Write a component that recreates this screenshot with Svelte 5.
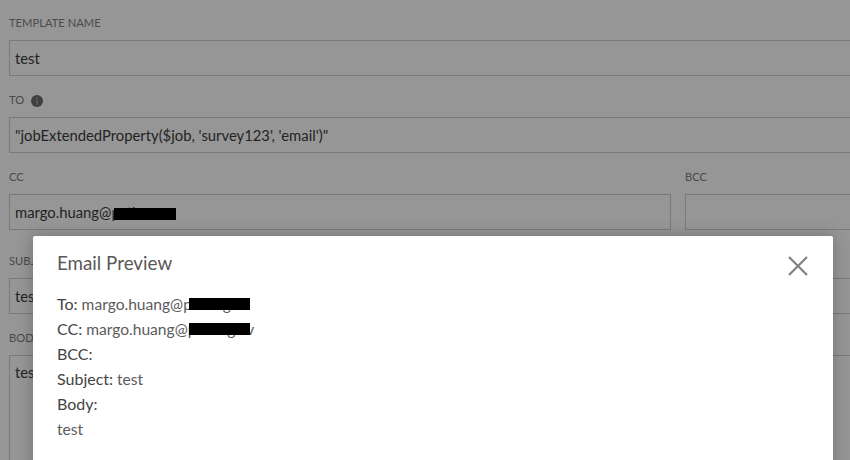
<script>
  const fields = [
    { label: 'TEMPLATE NAME', value: 'test' },
    { label: 'TO', value: `"jobExtendedProperty($job, 'survey123', 'email')"`, info: true },
  ];
</script>

<div class="page">
  <form class="form">
    {#each fields as field}
      <div class="field">
        <div class="label">
          {field.label}
          {#if field.info}
            <svg class="info" viewBox="0 0 12 12" width="12" height="12">
              <circle cx="6" cy="6" r="6" fill="#6e6e6e" />
              <rect x="5" y="5" width="2" height="4.5" fill="#979797" />
              <rect x="5" y="2.4" width="2" height="1.7" fill="#979797" />
            </svg>
          {/if}
        </div>
        <div class="input">{field.value}</div>
      </div>
    {/each}

    <div class="row">
      <div class="field cc">
        <div class="label">CC</div>
        <div class="input masked">margo.huang@pxtlxxx<span class="redact form-mask"></span></div>
      </div>
      <div class="field bcc">
        <div class="label">BCC</div>
        <div class="input"></div>
      </div>
    </div>

    <div class="field">
      <div class="label">SUBJECT</div>
      <div class="input">test</div>
    </div>

    <div class="field">
      <div class="label">BODY</div>
      <div class="input area">test</div>
    </div>
  </form>

  <div class="overlay"></div>

  <div class="modal">
    <div class="head">
      <h2>Email Preview</h2>
      <button type="button" class="close" aria-label="Close">
        <svg viewBox="0 0 20 20" width="20" height="20">
          <path d="M1 1 19 19M19 1 1 19" stroke="#808080" stroke-width="2.2" fill="none" />
        </svg>
      </button>
    </div>
    <div class="lines">
      <p><b>To:</b> margo.huang@pxxxxg<span class="redact to-mask"></span></p>
      <p><b>CC:</b> margo.huang@pxxxxgx.v<span class="redact to-mask"></span></p>
      <p><b>BCC:</b></p>
      <p><b>Subject:</b> test</p>
      <p><b>Body:</b></p>
      <p class="body-text">test</p>
    </div>
  </div>
</div>

<style>
  :global(body) {
    margin: 0;
    background: #fff;
  }

  .page {
    position: relative;
    width: 850px;
    height: 460px;
    overflow: hidden;
    font-family: Lato, "Open Sans", sans-serif;
    color: #3c3c3c;
  }

  .form {
    width: 1000px;
    padding: 15px 0 0 9px;
    display: flex;
    flex-direction: column;
    gap: 16px;
  }

  .label {
    height: 16px;
    line-height: 16px;
    margin-bottom: 9px;
    font-size: 11.2px;
    color: #808080;
    display: flex;
    align-items: center;
    gap: 7px;
  }

  .info {
    margin-top: 2px;
  }

  .input {
    box-sizing: border-box;
    height: 36px;
    padding: 0 5px;
    line-height: 34px;
    font-size: 14.8px;
    border: 1px solid #cfcfcf;
  }

  .input.masked {
    position: relative;
  }

  .input.area {
    height: 140px;
    line-height: 32px;
  }

  .row {
    display: flex;
    gap: 14px;
    margin-bottom: 7px;
  }

  .cc {
    width: 662px;
  }

  .bcc {
    flex: 1;
  }

  .redact {
    position: absolute;
    background: #000;
    z-index: 1;
  }

  .form-mask {
    left: 104px;
    top: 13px;
    width: 62px;
    height: 12px;
  }

  .overlay {
    position: absolute;
    inset: 0;
    background: rgba(0, 0, 0, 0.41);
  }

  .modal {
    position: absolute;
    left: 33px;
    top: 236px;
    width: 800px;
    height: 260px;
    box-sizing: border-box;
    padding: 0 24px;
    background: #fff;
    border-radius: 2px;
    box-shadow: 0 0 16px rgba(0, 0, 0, 0.25);
  }

  .head {
    display: flex;
    align-items: center;
    justify-content: space-between;
    height: 54px;
  }

  h2 {
    margin: 0 0 2px;
    font-size: 18.8px;
    font-weight: 400;
    color: #595959;
  }

  .close {
    padding: 0;
    border: 0;
    background: none;
    display: flex;
    margin-right: 1px;
    margin-top: 5px;
  }

  .lines {
    padding-top: 1px;
  }

  .lines p {
    margin: 0;
    position: relative;
    height: 25px;
    line-height: 25px;
    font-size: 15.6px;
    color: #5c5c5c;
  }

  .lines .body-text {
    line-height: 27px;
  }

  .lines b {
    font-weight: 400;
    font-size: 16px;
    color: #444;
  }

  .to-mask {
    left: 132px;
    top: 7px;
    width: 61px;
    height: 12px;
  }
</style>
